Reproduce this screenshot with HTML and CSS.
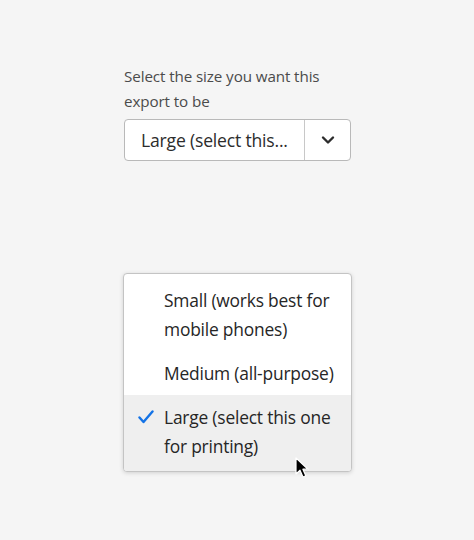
FILE: index.html
```
<!DOCTYPE html>
<html lang="en">
<head>
<meta charset="utf-8">
<title>Picker</title>
<link rel="stylesheet" href="styles.css">
</head>
<body>
<main class="stage">
  <section class="field">
    <label class="field-label" for="size">Select the size you want this export to be</label>
    <div class="picker" id="size">
      <span class="picker-value">Large (select this...</span>
      <span class="picker-button">
        <svg width="14" height="10" viewBox="0 0 14 10" aria-hidden="true"><path d="M2 2.5 L7 7.5 L12 2.5" fill="none" stroke="#2c2c2c" stroke-width="2.4" stroke-linecap="round" stroke-linejoin="round"/></svg>
      </span>
    </div>
  </section>

  <ul class="menu">
    <li class="menu-item"><span class="check"></span><span class="menu-text">Small (works best for mobile phones)</span></li>
    <li class="menu-item"><span class="check"></span><span class="menu-text">Medium (all-purpose)</span></li>
    <li class="menu-item is-selected">
      <span class="check">
        <svg width="16" height="14" viewBox="0 0 16 14" aria-hidden="true"><path d="M1.5 7.5 L5.5 12 L14.5 1.5" fill="none" stroke="#1473e6" stroke-width="2.4" stroke-linecap="round" stroke-linejoin="round"/></svg>
      </span>
      <span class="menu-text">Large (select this one for printing)</span>
      <svg class="cursor" width="16" height="24" viewBox="0 0 16 24" aria-hidden="true"><path d="M1 1 L1 17 L5 13.2 L8 20 L10.8 18.8 L7.9 12.2 L13 12.2 Z" fill="#000" stroke="#fff" stroke-width="1.2" stroke-linejoin="round"/></svg>
    </li>
  </ul>
</main>
</body>
</html>
```
FILE: styles.css
```
html, body {
  margin: 0;
  padding: 0;
  background: #f5f5f5;
}

body {
  font-family: "Open Sans", "Noto Sans", sans-serif;
  color: #2c2c2c;
  width: 474px;
  height: 540px;
  overflow: hidden;
}

.stage {
  display: flex;
  flex-direction: column;
  padding: 64px 0 0 123px;
}

.field {
  display: flex;
  flex-direction: column;
  gap: 5px;
  padding-left: 1px;
  width: 227px;
}

.field-label {
  font-size: 15.2px;
  line-height: 25px;
  color: #4b4b4b;
  letter-spacing: -0.1px;
}

.picker {
  display: flex;
  height: 42px;
  box-sizing: border-box;
  border: 1px solid #b9b9b9;
  border-radius: 4px;
  background: #fff;
}

.picker-value {
  flex: 1;
  display: flex;
  align-items: center;
  padding-left: 16px;
  font-size: 17.6px;
  letter-spacing: -0.2px;
  color: #2c2c2c;
  border-right: 1px solid #c8c8c8;
}

.picker-button {
  width: 45px;
  display: flex;
  align-items: center;
  justify-content: center;
}

.menu {
  list-style: none;
  margin: 112px 0 0 0;
  padding: 4px 0 0;
  width: 229px;
  box-sizing: border-box;
  background: #fff;
  border: 1px solid #c4c4c4;
  border-radius: 4px;
  box-shadow: 0 1px 4px rgba(0, 0, 0, 0.15);
}

.menu-item {
  position: relative;
  display: flex;
  padding: 8px 10px 7px 14px;
  font-size: 17.4px;
  line-height: 29px;
  letter-spacing: -0.2px;
  color: #262626;
}

.menu-item.is-selected {
  background: #efefef;
  padding-bottom: 10px;
  border-radius: 0 0 3px 3px;
}

.check {
  width: 26px;
  flex: none;
  display: flex;
  align-items: flex-start;
  padding-top: 7px;
}

.menu-text {
  flex: 1;
}

.cursor {
  position: absolute;
  left: 171px;
  top: 62px;
}
```
